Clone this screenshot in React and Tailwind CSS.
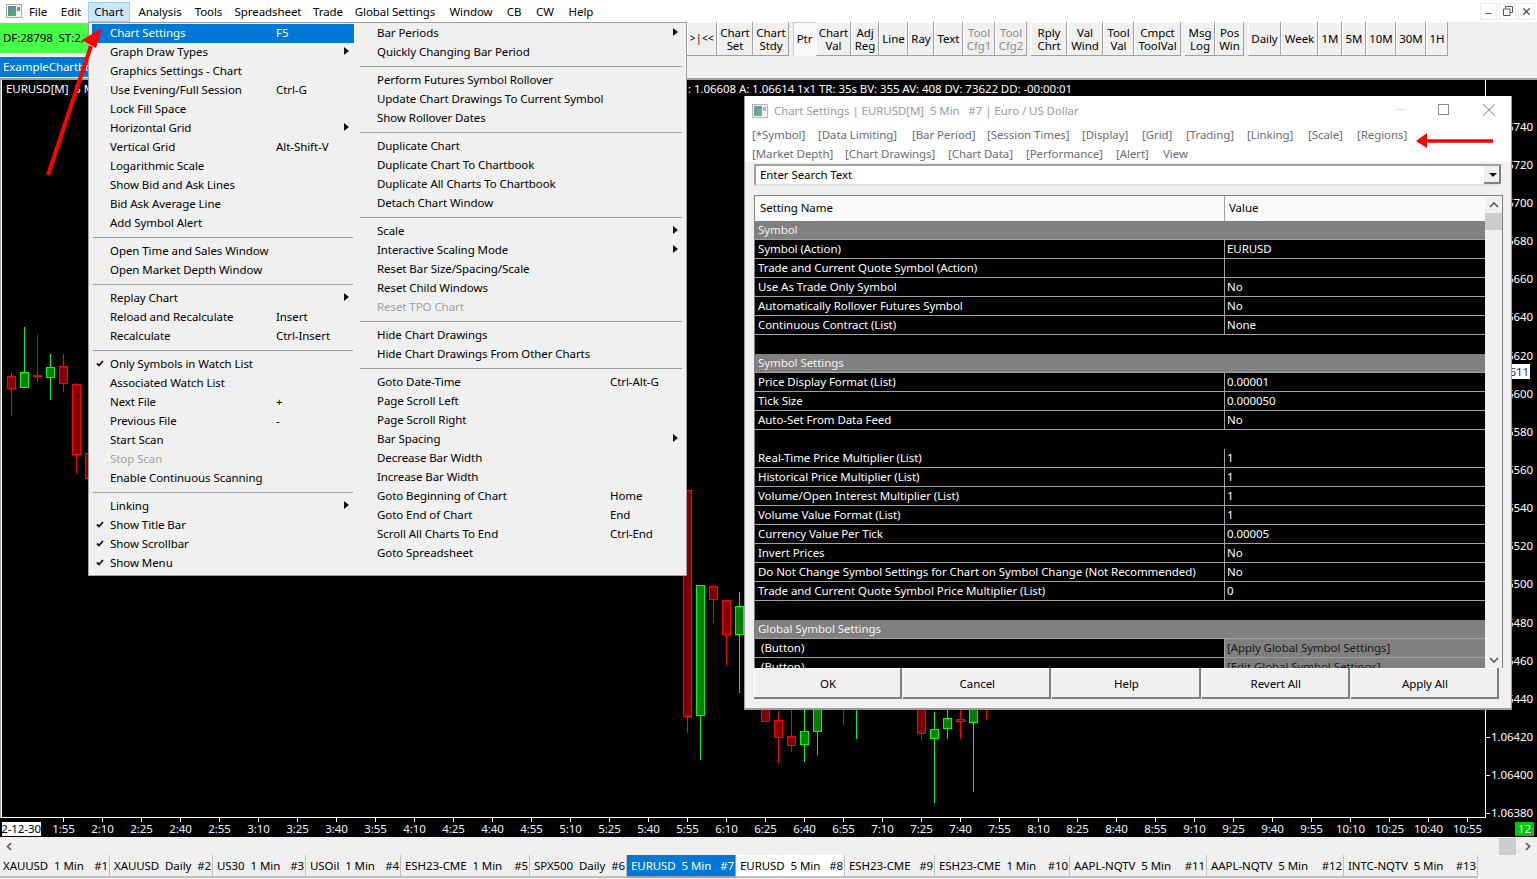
import { Minus, X } from "lucide-react";

const BTN_RAISED = "shadow-[inset_-1px_-1px_0_#a0a0a0,inset_1px_1px_0_#ffffff]";

const menuBar = [
  { label: "File", cls: "w-[32px]" },
  { label: "Edit", cls: "w-[34px]" },
  { label: "Chart", active: true, cls: "w-[42px]" },
  { label: "Analysis", cls: "w-[60px]" },
  { label: "Tools", cls: "w-[37px]" },
  { label: "Spreadsheet", cls: "w-[82px]" },
  { label: "Trade", cls: "w-[38px]" },
  { label: "Global Settings", cls: "w-[96px]" },
  { label: "Window", cls: "w-[56px]" },
  { label: "CB", cls: "w-[30px]" },
  { label: "CW", cls: "w-[32px]" },
  { label: "Help", cls: "w-[40px]" },
];

const toolGroups = [
  {
    gap: "ml-[687px]",
    items: [
      { a: ">|<<", cls: "w-[30px]", small: true },
      { a: "Chart", b: "Set", cls: "w-[36px]" },
      { a: "Chart", b: "Stdy", cls: "w-[36px]" },
    ],
  },
  {
    gap: "ml-[4px]",
    items: [
      { a: "Ptr", cls: "w-[23px]", sunken: true },
      { a: "Chart", b: "Val", cls: "w-[35px]" },
      { a: "Adj", b: "Reg", cls: "w-[28px]" },
      { a: "Line", cls: "w-[29px]" },
      { a: "Ray", cls: "w-[26px]" },
      { a: "Text", cls: "w-[29px]" },
      { a: "Tool", b: "Cfg1", cls: "w-[32px]", off: true },
      { a: "Tool", b: "Cfg2", cls: "w-[32px]", off: true },
    ],
  },
  {
    gap: "ml-[4px]",
    items: [
      { a: "Rply", b: "Chrt", cls: "w-[36px]" },
      { a: "Val", b: "Wind", cls: "w-[36px]" },
      { a: "Tool", b: "Val", cls: "w-[31px]" },
      { a: "Cmpct", b: "ToolVal", cls: "w-[47px]" },
    ],
  },
  {
    gap: "ml-[4px]",
    items: [
      { a: "Msg", b: "Log", cls: "w-[30px]" },
      { a: "Pos", b: "Win", cls: "w-[29px]" },
    ],
  },
  {
    gap: "ml-[4px]",
    items: [
      { a: "Daily", cls: "w-[33px]" },
      { a: "Week", cls: "w-[37px]" },
      { a: "1M", cls: "w-[24px]" },
      { a: "5M", cls: "w-[24px]" },
      { a: "10M", cls: "w-[30px]" },
      { a: "30M", cls: "w-[30px]" },
      { a: "1H", cls: "w-[22px]" },
    ],
  },
];

// null = separador
const chartMenuLeft = [
  { t: "Chart Settings", k: "F5", on: true },
  { t: "Graph Draw Types", sub: true },
  { t: "Graphics Settings - Chart" },
  { t: "Use Evening/Full Session", k: "Ctrl-G" },
  { t: "Lock Fill Space" },
  { t: "Horizontal Grid", sub: true },
  { t: "Vertical Grid", k: "Alt-Shift-V" },
  { t: "Logarithmic Scale" },
  { t: "Show Bid and Ask Lines" },
  { t: "Bid Ask Average Line" },
  { t: "Add Symbol Alert" },
  null,
  { t: "Open Time and Sales Window" },
  { t: "Open Market Depth Window" },
  null,
  { t: "Replay Chart", sub: true },
  { t: "Reload and Recalculate", k: "Insert" },
  { t: "Recalculate", k: "Ctrl-Insert" },
  null,
  { t: "Only Symbols in Watch List", check: true },
  { t: "Associated Watch List" },
  { t: "Next File", k: "+" },
  { t: "Previous File", k: "-" },
  { t: "Start Scan" },
  { t: "Stop Scan", off: true },
  { t: "Enable Continuous Scanning" },
  null,
  { t: "Linking", sub: true },
  { t: "Show Title Bar", check: true },
  { t: "Show Scrollbar", check: true },
  { t: "Show Menu", check: true },
];

const chartMenuRight = [
  { t: "Bar Periods", sub: true },
  { t: "Quickly Changing Bar Period" },
  null,
  { t: "Perform Futures Symbol Rollover" },
  { t: "Update Chart Drawings To Current Symbol" },
  { t: "Show Rollover Dates" },
  null,
  { t: "Duplicate Chart" },
  { t: "Duplicate Chart To Chartbook" },
  { t: "Duplicate All Charts To Chartbook" },
  { t: "Detach Chart Window" },
  null,
  { t: "Scale", sub: true },
  { t: "Interactive Scaling Mode", sub: true },
  { t: "Reset Bar Size/Spacing/Scale" },
  { t: "Reset Child Windows" },
  { t: "Reset TPO Chart", off: true },
  null,
  { t: "Hide Chart Drawings" },
  { t: "Hide Chart Drawings From Other Charts" },
  null,
  { t: "Goto Date-Time", k: "Ctrl-Alt-G" },
  { t: "Page Scroll Left" },
  { t: "Page Scroll Right" },
  { t: "Bar Spacing", sub: true },
  { t: "Decrease Bar Width" },
  { t: "Increase Bar Width" },
  { t: "Goto Beginning of Chart", k: "Home" },
  { t: "Goto End of Chart", k: "End" },
  { t: "Scroll All Charts To End", k: "Ctrl-End" },
  { t: "Goto Spreadsheet" },
];

const settingsTabs = [
  [
    { t: "[*Symbol]", cls: "w-[66px]" },
    { t: "[Data Limiting]", cls: "w-[94px]" },
    { t: "[Bar Period]", cls: "w-[75px]" },
    { t: "[Session Times]", cls: "w-[95px]" },
    { t: "[Display]", cls: "w-[60px]" },
    { t: "[Grid]", cls: "w-[44px]" },
    { t: "[Trading]", cls: "w-[61px]" },
    { t: "[Linking]", cls: "w-[61px]" },
    { t: "[Scale]", cls: "w-[49px]" },
    { t: "[Regions]", cls: "w-[60px]" },
  ],
  [
    { t: "[Market Depth]", cls: "w-[93px]" },
    { t: "[Chart Drawings]", cls: "w-[103px]" },
    { t: "[Chart Data]", cls: "w-[78px]" },
    { t: "[Performance]", cls: "w-[90px]" },
    { t: "[Alert]", cls: "w-[47px]" },
    { t: "View", cls: "w-[40px]" },
  ],
];

const settingRows = [
  { section: "Symbol" },
  { name: "Symbol (Action)", value: "EURUSD" },
  { name: "Trade and Current Quote Symbol (Action)" },
  { name: "Use As Trade Only Symbol", value: "No" },
  { name: "Automatically Rollover Futures Symbol", value: "No" },
  { name: "Continuous Contract (List)", value: "None" },
  {},
  { section: "Symbol Settings" },
  { name: "Price Display Format (List)", value: "0.00001" },
  { name: "Tick Size", value: "0.000050" },
  { name: "Auto-Set From Data Feed", value: "No" },
  {},
  { name: "Real-Time Price Multiplier (List)", value: "1" },
  { name: "Historical Price Multiplier (List)", value: "1" },
  { name: "Volume/Open Interest Multiplier (List)", value: "1" },
  { name: "Volume Value Format (List)", value: "1" },
  { name: "Currency Value Per Tick", value: "0.00005" },
  { name: "Invert Prices", value: "No" },
  { name: "Do Not Change Symbol Settings for Chart on Symbol Change (Not Recommended)", value: "No" },
  { name: "Trade and Current Quote Symbol Price Multiplier (List)", value: "0" },
  {},
  { section: "Global Symbol Settings" },
  { name: "(Button)", value: "[Apply Global Symbol Settings]", button: true },
  { name: "(Button)", value: "[Edit Global Symbol Settings]", button: true },
];

const priceLabels = [
  "1.06740", "1.06720", "1.06700", "1.06680", "1.06660", "1.06640", "1.06620", "1.06600", "1.06580", "1.06560",
  "1.06540", "1.06520", "1.06500", "1.06480", "1.06460", "1.06440", "1.06420", "1.06400", "1.06380",
];

const timeLabels = [
  "1:55", "2:10", "2:25", "2:40", "2:55", "3:10", "3:25", "3:40", "3:55", "4:10", "4:25", "4:40", "4:55", "5:10",
  "5:25", "5:40", "5:55", "6:10", "6:25", "6:40", "6:55", "7:10", "7:25", "7:40", "7:55", "8:10", "8:25", "8:40",
  "8:55", "9:10", "9:25", "9:40", "9:55", "10:10", "10:25", "10:40", "10:55",
];

const chartTabs = [
  { sym: "XAUUSD", per: "1 Min", n: "#1", cls: "w-[110px]" },
  { sym: "XAUUSD", per: "Daily", n: "#2", cls: "w-[103px]" },
  { sym: "US30", per: "1 Min", n: "#3", cls: "w-[93px]" },
  { sym: "USOil", per: "1 Min", n: "#4", cls: "w-[95px]" },
  { sym: "ESH23-CME", per: "1 Min", n: "#5", cls: "w-[129px]" },
  { sym: "SPX500", per: "Daily", n: "#6", cls: "w-[97px]" },
  { sym: "EURUSD", per: "5 Min", n: "#7", cls: "w-[109px]", on: true },
  { sym: "EURUSD", per: "5 Min", n: "#8", cls: "w-[109px]", white: true },
  { sym: "ESH23-CME", per: "", n: "#9", cls: "w-[90px]" },
  { sym: "ESH23-CME", per: "1 Min", n: "#10", cls: "w-[135px]" },
  { sym: "AAPL-NQTV", per: "5 Min", n: "#11", cls: "w-[137px]" },
  { sym: "AAPL-NQTV", per: "5 Min", n: "#12", cls: "w-[137px]" },
  { sym: "INTC-NQTV", per: "5 Min", n: "#13", cls: "w-[134px]" },
];

// [x izquierda, tope cuerpo, base cuerpo, tope mecha, base mecha, sube]
const candles = [
  [7, 376, 388, 373, 416, false],
  [20, 372, 387, 327, 387, true],
  [33, 375, 376, 335, 382, false],
  [46, 367, 377, 354, 400, true],
  [59, 366, 383, 354, 392, false],
  [72, 384, 454, 383, 474, false],
  [85, 453, 478, 453, 478, false],
  [683, 490, 716, 490, 733, false],
  [696, 585, 715, 585, 760, true],
  [709, 586, 599, 585, 623, false],
  [722, 600, 634, 600, 665, false],
  [735, 606, 634, 592, 693, true],
  [761, 700, 721, 700, 721, false],
  [774, 720, 737, 711, 763, false],
  [787, 736, 745, 700, 752, false],
  [800, 731, 744, 700, 762, true],
  [813, 700, 731, 700, 755, true],
  [917, 700, 733, 700, 741, false],
  [930, 729, 738, 712, 803, true],
  [943, 718, 728, 700, 739, true],
  [956, 719, 721, 700, 739, false],
  [969, 700, 722, 700, 792, true],
];

const wicks = [
  [843, 700, 725, false],
  [856, 700, 739, true],
  [986, 700, 719, false],
];

const AppIcon = ({ muted }) => (
  <svg viewBox="0 0 16 14" className="h-[14px] w-[16px] flex-shrink-0">
    <rect x="0.5" y="0.5" width="15" height="13" fill="#f4f4f4" stroke={muted ? "#b5b5b5" : "#a8a8a8"} />
    <rect x="2" y="2" width="8" height="10" fill={muted ? "#6f97a5" : "#5f8f9f"} />
    <rect x="4" y="5" width="6" height="7" fill={muted ? "#6fae88" : "#5aa67a"} />
    <rect x="11" y="3" width="3" height="4" fill={muted ? "#9fc0c0" : "#5f8f9f"} />
  </svg>
);

const Tri = () => (
  <svg viewBox="0 0 5 8" className="h-[8px] w-[5px]">
    <path d="M0 0 L5 4 L0 8 Z" fill="#111" />
  </svg>
);

const Check = () => (
  <svg viewBox="0 0 8 7" className="h-[7px] w-[8px]">
    <path d="M1 3.5 L3 5.5 L7 1" fill="none" stroke="#111" strokeWidth="1.8" />
  </svg>
);

const MenuBar = () => (
  <div className="flex h-[22px] items-center bg-white pl-[6px]">
    <AppIcon />
    <div className="flex h-full items-end">
      {menuBar.map((m) => (
        <div
          key={m.label}
          className={`flex h-[20px] items-center justify-center ${m.cls} ${m.active ? "border border-[#99d1ff] bg-[#cce8ff]" : ""}`}
        >
          {m.label}
        </div>
      ))}
    </div>
    <div className="ml-auto mr-[2px] flex gap-[2px]">
      <div className="flex h-[17px] w-[17px] items-center justify-center border border-[#ececec] text-[#555]">
        <Minus size={9} strokeWidth={2.5} className="translate-y-[2px]" />
      </div>
      <div className="flex h-[17px] w-[17px] items-center justify-center border border-[#ececec] text-[#555]">
        <svg viewBox="0 0 10 10" className="h-[10px] w-[10px]">
          <path d="M2.5 2.5 V0.5 H9.5 V6.5 H7.5 M0.5 3 H7 V9.5 H0.5 Z" fill="none" stroke="#555" />
        </svg>
      </div>
      <div className="flex h-[17px] w-[17px] items-center justify-center border border-[#ececec] text-[#555]">
        <X size={11} strokeWidth={3} />
      </div>
    </div>
  </div>
);

const ToolButton = ({ a, b, cls, off, sunken, small }) => (
  <div
    className={`flex h-full flex-col items-center justify-center leading-[13px] ${cls} ${
      sunken ? "bg-[#f9f9f9] shadow-[inset_1px_1px_0_#c8c8c8]" : BTN_RAISED
    } ${off ? "text-[#8c8c8c]" : ""} ${small ? "text-[10px] tracking-[0.5px]" : ""} ${b ? "" : "pb-[2px]"}`}
  >
    <span>{a}</span>
    {b && <span>{b}</span>}
  </div>
);

const Toolbar = () => (
  <div className="flex h-[58px] flex-col border-b-2 border-[#a0a0a0] bg-[#f0f0f0]">
    <div className="relative flex h-[34px] flex-shrink-0">
      <div className="absolute left-0 top-[1px] flex h-[30px] w-[100px] items-center bg-[#47ff47] pl-[3px] whitespace-pre">
        DF:28798  ST:2, 2
      </div>
      {toolGroups.map((g, i) => (
        <div key={i} className={`flex h-full ${g.gap}`}>
          {g.items.map((it) => (
            <ToolButton key={it.a + (it.b || "")} {...it} />
          ))}
        </div>
      ))}
    </div>
    <div className="mt-[1px] flex h-[20px] w-[100px] items-center bg-[#0078d7] pl-[3px] text-white">
      ExampleChartbook
    </div>
  </div>
);

const Candles = () => (
  <svg viewBox="2 80 1483 737" className="absolute inset-0 h-[737px] w-[1483px]">
    {candles.map(([x, top, bottom, wTop, wBottom, up]) => {
      const stroke = up ? "#00ff00" : "#ff0000";
      const fill = up ? "#008000" : "#800000";
      return (
        <g key={x}>
          <line x1={x + 4.5} x2={x + 4.5} y1={wTop} y2={wBottom} stroke={stroke} />
          <rect x={x + 0.5} y={top + 0.5} width="8" height={bottom - top} fill={fill} stroke={stroke} />
        </g>
      );
    })}
    {wicks.map(([x, y1, y2, up]) => (
      <line key={x} x1={x + 0.5} x2={x + 0.5} y1={y1} y2={y2} stroke={up ? "#00ff00" : "#ff0000"} />
    ))}
  </svg>
);

const ChartArea = () => (
  <div className="flex h-[738px] flex-shrink-0 border-l border-[#a0a0a0] bg-black text-white">
    <div className="relative h-full w-[1485px] border-b border-l border-r border-white">
      <Candles />
      <div className="relative flex h-[17px] items-center whitespace-pre pl-[4px]">
        <span className="w-[682px]">EURUSD[M]  5 Min</span>
        <span>: 1.06608 A: 1.06614 1x1 TR: 35s BV: 355 AV: 408 DV: 73622 DD: -00:00:01</span>
      </div>
    </div>
    <div className="relative flex-1 overflow-hidden pt-[27.5px]">
      {priceLabels.map((p) => (
        <div key={p} className="flex h-[38.17px] items-center">
          <span className="h-px w-[4px] bg-white" />
          <span className="pl-[1px]">{p}</span>
        </div>
      ))}
      <div className="absolute left-0 top-[284px] flex h-[15px] w-[44px] items-center justify-end bg-white pr-[1px] text-[#2a1a8a]">
        1.06611
      </div>
    </div>
  </div>
);

const TimeAxis = () => (
  <div className="flex h-[19px] flex-shrink-0 bg-black text-[#e8f0ff]">
    <div className="ml-[2px] mt-[4px] flex h-[14px] w-[39px] items-center justify-end overflow-hidden whitespace-nowrap bg-white text-black">
      2-12-30
    </div>
    <div className="ml-[3px] flex">
      {timeLabels.map((t) => (
        <div key={t} className="flex w-[39px] flex-col items-center">
          <span className="h-[4px] w-px bg-white" />
          <span className="leading-[14px]">{t}</span>
        </div>
      ))}
    </div>
    <div className="ml-auto mr-[3px] mt-[4px] flex h-[14px] w-[19px] items-center justify-center bg-[#00c800]">12</div>
  </div>
);

const HorizontalScroll = () => (
  <div className="flex h-[18px] flex-shrink-0 items-center bg-[#f0f0f0] pl-[6px] pr-[6px]">
    <svg viewBox="0 0 6 9" className="h-[9px] w-[6px]">
      <path d="M5 1 L1.5 4.5 L5 8" fill="none" stroke="#555" strokeWidth="1.6" />
    </svg>
    <div className="ml-auto mr-[9px] h-[17px] w-[17px] bg-[#cdcdcd]" />
    <svg viewBox="0 0 6 9" className="h-[9px] w-[6px]">
      <path d="M1 1 L4.5 4.5 L1 8" fill="none" stroke="#555" strokeWidth="1.6" />
    </svg>
  </div>
);

const ChartTabs = () => (
  <div className="flex h-[24px] flex-shrink-0 bg-[#f0f0f0]">
    {chartTabs.map((t) => (
      <div
        key={t.n}
        className={`flex h-[23px] items-center justify-between whitespace-pre border-b-2 border-r pl-[4px] pr-[1px] pt-[1px] first:pl-[3px] ${t.cls} ${
          t.on
            ? "border-[#a0a0a0] bg-[#0078d7] text-white"
            : t.white
              ? "border-[#c0c0c0] bg-white"
              : "border-[#c0c0c0] bg-[#f0f0f0]"
        }`}
      >
        <span>
          {t.sym}
          {t.per ? `  ${t.per}` : ""}
        </span>
        <span>{t.n}</span>
      </div>
    ))}
  </div>
);

const MenuColumn = ({ rows, width, textPad, keyAt, subAt }) => (
  <div className={`flex flex-col ${width}`}>
    {rows.map((r, i) =>
      r === null ? (
        <div key={i} className="flex h-[9px] flex-shrink-0 items-center pl-[1px] pr-[1px]">
          <div className="h-px w-full bg-[#a0a0a0]" />
        </div>
      ) : (
        <div
          key={r.t}
          className={`relative flex h-[19px] flex-shrink-0 items-center pb-[2px] ${textPad} ${r.on ? "bg-[#0078d7] text-white" : ""} ${
            r.off ? "text-[#a0a0a0]" : ""
          }`}
        >
          {r.check && (
            <span className="absolute left-[4px] top-[5px]">
              <Check />
            </span>
          )}
          <span>{r.t}</span>
          {r.k && <span className={`absolute top-[1px] ${keyAt}`}>{r.k}</span>}
          {r.sub && (
            <span className={`absolute top-[4px] ${subAt}`}>
              <Tri />
            </span>
          )}
        </div>
      ),
    )}
  </div>
);

const ChartMenu = () => (
  <div className="absolute left-[88px] top-[22px] flex h-[554px] w-[599px] border border-[#a0a0a0] bg-[#f0f0f0] pl-[3px] pt-[1px]">
    <MenuColumn rows={chartMenuLeft} width="w-[262px]" textPad="pl-[18px]" keyAt="left-[184px]" subAt="left-[252px]" />
    <div className="ml-[5px]">
      <MenuColumn rows={chartMenuRight} width="w-[324px]" textPad="pl-[18px]" keyAt="left-[251px]" subAt="left-[314px]" />
    </div>
  </div>
);

const SettingRow = ({ row }) => {
  if (row.section) {
    return (
      <div className="flex h-[19px] flex-shrink-0 items-center border-b border-[#a0a0a0] bg-[#808080] pl-[3px] text-[#f2f2f2]">
        {row.section}
      </div>
    );
  }
  if (!row.name) {
    return <div className="h-[19px] flex-shrink-0 bg-black" />;
  }
  return (
    <div className="flex h-[19px] flex-shrink-0 border-b border-[#a0a0a0] bg-black text-white">
      <div className={`flex w-[470px] items-center border-r border-[#a0a0a0] ${row.button ? "pl-[6px]" : "pl-[3px]"}`}>
        {row.name}
      </div>
      <div className={`flex flex-1 items-center pl-[2px] ${row.button ? "bg-[#808080] text-[#1a1a1a]" : ""}`}>{row.value}</div>
    </div>
  );
};

const SettingsDialog = () => (
  <div className="absolute left-[744px] top-[96px] flex h-[614px] w-[768px] flex-col border-b-2 border-l border-r border-[#9a9a9a] bg-[#f0f0f0]">
    <div className="h-[66px] flex-shrink-0 bg-white">
      <div className="flex h-[29px] items-center pl-[7px] text-[#9b9b9b]">
        <AppIcon muted />
        <span className="ml-[6px] whitespace-pre">Chart Settings | EURUSD[M]  5 Min   #7 | Euro / US Dollar</span>
        <div className="ml-auto mr-[11px] flex -translate-y-[1px] items-center gap-[29px] text-[#8a8a8a]">
          <Minus size={17} strokeWidth={1} className="text-[#d8d8d8]" />
          <div className="h-[11px] w-[11px] border border-[#8a8a8a]" />
          <X size={22} strokeWidth={1.1} />
        </div>
      </div>
      {settingsTabs.map((row, i) => (
        <div key={i} className="flex h-[19px] items-center pl-[7px] text-[#6e6a78]">
          {row.map((t) => (
            <span key={t.t} className={`flex-shrink-0 ${t.cls}`}>
              {t.t}
            </span>
          ))}
        </div>
      ))}
    </div>
    <div className="mx-[9px] mt-[2px] flex h-[22px] w-[747px] flex-shrink-0 items-center justify-between border-b-2 border-l-2 border-t-2 border-l-[#a0a0a0] border-b-[#e3e3e3] border-t-[#a0a0a0] bg-white pl-[4px]">
      <span>Enter Search Text</span>
      <div className="flex h-[18px] w-[17px] items-center justify-center bg-[#f0f0f0] shadow-[inset_-2px_-2px_0_#808080]">
        <svg viewBox="0 0 8 4" className="h-[4px] w-[8px]">
          <path d="M0 0 H8 L4 4 Z" fill="#111" />
        </svg>
      </div>
    </div>
    <div className="mx-[9px] mt-[9px] flex h-[473px] w-[749px] flex-shrink-0 overflow-hidden border-l border-r border-t border-[#808080]">
      <div className="flex w-[730px] flex-col overflow-hidden">
        <div className="flex h-[25px] flex-shrink-0 bg-[#f9f9f9]">
          <div className="flex w-[470px] items-center border-r border-[#a0a0a0] pb-[2px] pl-[5px]">Setting Name</div>
          <div className="flex items-center pb-[2px] pl-[4px]">Value</div>
        </div>
        {settingRows.map((r, i) => (
          <SettingRow key={i} row={r} />
        ))}
      </div>
      <div className="flex flex-1 flex-col items-center bg-[#f0f0f0]">
        <svg viewBox="0 0 10 6" className="mt-[6px] h-[6px] w-[10px]">
          <path d="M1 5 L5 1 L9 5" fill="none" stroke="#555" strokeWidth="1.6" />
        </svg>
        <div className="mt-[5px] h-[17px] w-full bg-[#cdcdcd]" />
        <svg viewBox="0 0 10 6" className="mb-[5px] mt-auto h-[6px] w-[10px]">
          <path d="M1 1 L5 5 L9 1" fill="none" stroke="#555" strokeWidth="1.6" />
        </svg>
      </div>
    </div>
    <div className="mx-[9px] flex h-[31px] w-[745px] flex-shrink-0 gap-[1px]">
      {["OK", "Cancel", "Help", "Revert All", "Apply All"].map((b) => (
        <div
          key={b}
          className="flex h-full flex-1 items-center justify-center bg-[#f0f0f0] shadow-[inset_-2px_-2px_0_#808080,inset_1px_1px_0_#ffffff]"
        >
          {b}
        </div>
      ))}
    </div>
  </div>
);

const Annotations = () => (
  <svg viewBox="0 0 1537 879" className="pointer-events-none absolute inset-0 h-[879px] w-[1537px]">
    <path d="M48 175 L91 46" stroke="#ff0000" strokeWidth="4" fill="none" />
    <path d="M102 28 L82 40 L96 48 Z" fill="#ff0000" />
    <path d="M1493 141 H1426" stroke="#ff0000" strokeWidth="3.5" fill="none" />
    <path d="M1416 141 L1427 133 V148 Z" fill="#ff0000" />
  </svg>
);

export default function App() {
  return (
    <div className="relative flex h-[879px] w-[1537px] flex-col overflow-hidden bg-white font-['Noto_Sans',sans-serif] text-[11.5px] leading-[16px] tracking-[-0.07px] text-black">
      <MenuBar />
      <Toolbar />
      <ChartArea />
      <TimeAxis />
      <HorizontalScroll />
      <ChartTabs />
      <SettingsDialog />
      <ChartMenu />
      <Annotations />
    </div>
  );
}
